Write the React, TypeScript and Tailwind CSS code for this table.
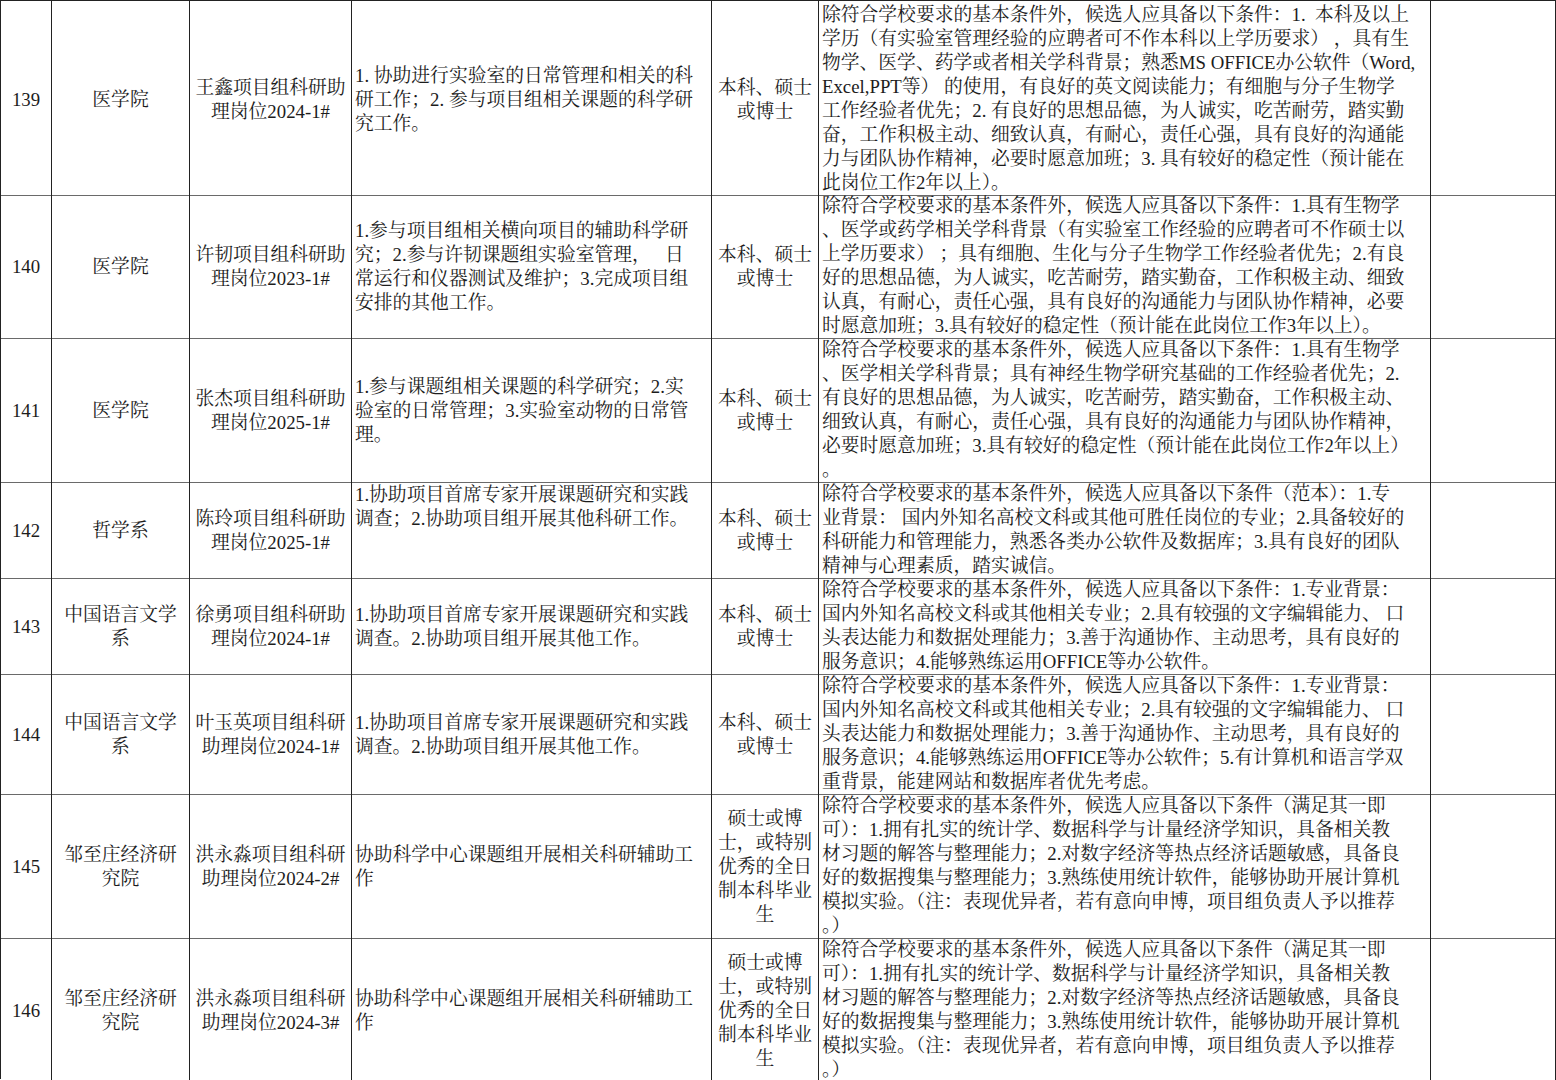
import React from 'react';

interface JobRow {
  no: string;
  dept: string[];
  position: string[];
  duties: string[];
  dutiesTop?: boolean;
  degree: string[];
  requirements: string[];
  height: string;
}

const degreeBasic = ['本科、硕士', '或博士'];
const degreeMaster = ['硕士或博', '士，或特别', '优秀的全日', '制本科毕业', '生'];

const reqHong = [
  '除符合学校要求的基本条件外，候选人应具备以下条件（满足其一即',
  '可）：1.拥有扎实的统计学、数据科学与计量经济学知识，具备相关教',
  '材习题的解答与整理能力；2.对数字经济等热点经济话题敏感，具备良',
  '好的数据搜集与整理能力；3.熟练使用统计软件，能够协助开展计算机',
  '模拟实验。（注：表现优异者，若有意向申博，项目组负责人予以推荐',
  '。）',
];

const rows: JobRow[] = [
  {
    no: '139',
    dept: ['医学院'],
    position: ['王鑫项目组科研助', '理岗位2024-1#'],
    duties: ['1. 协助进行实验室的日常管理和相关的科', '研工作；2. 参与项目组相关课题的科学研', '究工作。'],
    degree: degreeBasic,
    requirements: [
      '除符合学校要求的基本条件外，候选人应具备以下条件：1.  本科及以上',
      '学历（有实验室管理经验的应聘者可不作本科以上学历要求） ，具有生',
      '物学、医学、药学或者相关学科背景；熟悉MS OFFICE办公软件（Word,',
      'Excel,PPT等） 的使用，有良好的英文阅读能力；有细胞与分子生物学',
      '工作经验者优先；2. 有良好的思想品德，为人诚实，吃苦耐劳，踏实勤',
      '奋，工作积极主动、细致认真，有耐心，责任心强，具有良好的沟通能',
      '力与团队协作精神，必要时愿意加班；3. 具有较好的稳定性（预计能在',
      '此岗位工作2年以上）。',
    ],
    height: 'h-[191px]',
  },
  {
    no: '140',
    dept: ['医学院'],
    position: ['许韧项目组科研助', '理岗位2023-1#'],
    duties: ['1.参与项目组相关横向项目的辅助科学研', '究；2.参与许韧课题组实验室管理，   日', '常运行和仪器测试及维护；3.完成项目组', '安排的其他工作。'],
    degree: degreeBasic,
    requirements: [
      '除符合学校要求的基本条件外，候选人应具备以下条件：1.具有生物学',
      '、医学或药学相关学科背景（有实验室工作经验的应聘者可不作硕士以',
      '上学历要求） ；具有细胞、生化与分子生物学工作经验者优先；2.有良',
      '好的思想品德，为人诚实，吃苦耐劳，踏实勤奋，工作积极主动、细致',
      '认真，有耐心，责任心强，具有良好的沟通能力与团队协作精神，必要',
      '时愿意加班；3.具有较好的稳定性（预计能在此岗位工作3年以上）。',
    ],
    height: 'h-[144px]',
  },
  {
    no: '141',
    dept: ['医学院'],
    position: ['张杰项目组科研助', '理岗位2025-1#'],
    duties: ['1.参与课题组相关课题的科学研究；2.实', '验室的日常管理；3.实验室动物的日常管', '理。'],
    degree: degreeBasic,
    requirements: [
      '除符合学校要求的基本条件外，候选人应具备以下条件：1.具有生物学',
      '、医学相关学科背景；具有神经生物学研究基础的工作经验者优先；2.',
      '有良好的思想品德，为人诚实，吃苦耐劳，踏实勤奋，工作积极主动、',
      '细致认真，有耐心，责任心强，具有良好的沟通能力与团队协作精神，',
      '必要时愿意加班；3.具有较好的稳定性（预计能在此岗位工作2年以上）',
      '。',
    ],
    height: 'h-[144px]',
  },
  {
    no: '142',
    dept: ['哲学系'],
    position: ['陈玲项目组科研助', '理岗位2025-1#'],
    duties: ['1.协助项目首席专家开展课题研究和实践', '调查；2.协助项目组开展其他科研工作。'],
    dutiesTop: true,
    degree: degreeBasic,
    requirements: [
      '除符合学校要求的基本条件外，候选人应具备以下条件（范本）：1.专',
      '业背景： 国内外知名高校文科或其他可胜任岗位的专业；2.具备较好的',
      '科研能力和管理能力，熟悉各类办公软件及数据库；3.具有良好的团队',
      '精神与心理素质，踏实诚信。',
    ],
    height: 'h-[96px]',
  },
  {
    no: '143',
    dept: ['中国语言文学', '系'],
    position: ['徐勇项目组科研助', '理岗位2024-1#'],
    duties: ['1.协助项目首席专家开展课题研究和实践', '调查。2.协助项目组开展其他工作。'],
    degree: degreeBasic,
    requirements: [
      '除符合学校要求的基本条件外，候选人应具备以下条件：1.专业背景：',
      '国内外知名高校文科或其他相关专业；2.具有较强的文字编辑能力、 口',
      '头表达能力和数据处理能力；3.善于沟通协作、主动思考，具有良好的',
      '服务意识；4.能够熟练运用OFFICE等办公软件。',
    ],
    height: 'h-[96px]',
  },
  {
    no: '144',
    dept: ['中国语言文学', '系'],
    position: ['叶玉英项目组科研', '助理岗位2024-1#'],
    duties: ['1.协助项目首席专家开展课题研究和实践', '调查。2.协助项目组开展其他工作。'],
    degree: degreeBasic,
    requirements: [
      '除符合学校要求的基本条件外，候选人应具备以下条件：1.专业背景：',
      '国内外知名高校文科或其他相关专业；2.具有较强的文字编辑能力、 口',
      '头表达能力和数据处理能力；3.善于沟通协作、主动思考，具有良好的',
      '服务意识；4.能够熟练运用OFFICE等办公软件；5.有计算机和语言学双',
      '重背景，能建网站和数据库者优先考虑。',
    ],
    height: 'h-[120px]',
  },
  {
    no: '145',
    dept: ['邹至庄经济研', '究院'],
    position: ['洪永淼项目组科研', '助理岗位2024-2#'],
    duties: ['协助科学中心课题组开展相关科研辅助工', '作'],
    degree: degreeMaster,
    requirements: reqHong,
    height: 'h-[144px]',
  },
  {
    no: '146',
    dept: ['邹至庄经济研', '究院'],
    position: ['洪永淼项目组科研', '助理岗位2024-3#'],
    duties: ['协助科学中心课题组开展相关科研辅助工', '作'],
    degree: degreeMaster,
    requirements: reqHong,
    height: 'h-[143px]',
  },
];

const cell = 'border-r border-b border-r-[#222] border-b-[#6a6a6a] overflow-visible';

function Lines({ lines }: { lines: string[] }) {
  return (
    <>
      {lines.map((line, i) => (
        <div key={i} className="whitespace-pre">
          {line}
        </div>
      ))}
    </>
  );
}

function Row({ row }: { row: JobRow }) {
  return (
    <div className={`grid grid-cols-[51px_138px_162px_360px_107px_612px_125px] ${row.height}`}>
      <div className={`${cell} flex items-center justify-center pt-[4px]`}>
        {row.no}
      </div>
      <div className={`${cell} flex flex-col items-center justify-center text-center pt-[4px]`}>
        <Lines lines={row.dept} />
      </div>
      <div className={`${cell} flex flex-col items-center justify-center text-center pt-[4px]`}>
        <Lines lines={row.position} />
      </div>
      <div className={`${cell} flex flex-col pl-[3px] ${row.dutiesTop ? 'justify-start pt-[3px]' : 'justify-center pt-[4px]'}`}>
        <Lines lines={row.duties} />
      </div>
      <div className={`${cell} flex flex-col items-center justify-center text-center pt-[4px]`}>
        <Lines lines={row.degree} />
      </div>
      <div className={`${cell} flex flex-col justify-start pl-[3px] pt-[2px]`}>
        <Lines lines={row.requirements} />
      </div>
      <div className={cell} />
    </div>
  );
}

export default function App() {
  return (
    <div className="w-[1556px] h-[1080px] overflow-hidden bg-white">
      <div className="w-[1556px] border-l border-t border-[#222] text-[18.8px] leading-[24px] text-[#1c1c1c] font-['Liberation_Serif','Noto_Serif_CJK_SC','Noto_Sans_CJK_SC',serif]">
        {rows.map((row) => (
          <Row key={row.no} row={row} />
        ))}
      </div>
    </div>
  );
}
